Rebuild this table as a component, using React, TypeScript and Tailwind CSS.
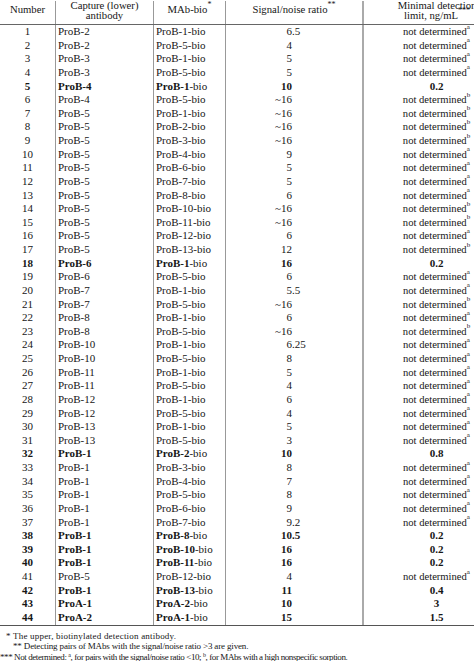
import React from 'react';

type Row = {
  n: number;
  capture: string;
  mab: string;
  ratio: string;
  limit: string;
  bold?: boolean;
};

const rows: Row[] = [
  { n: 1, capture: 'ProB-2', mab: 'ProB-1', ratio: '6.5', limit: 'a' },
  { n: 2, capture: 'ProB-2', mab: 'ProB-5', ratio: '4', limit: 'a' },
  { n: 3, capture: 'ProB-3', mab: 'ProB-1', ratio: '5', limit: 'a' },
  { n: 4, capture: 'ProB-3', mab: 'ProB-5', ratio: '5', limit: 'a' },
  { n: 5, capture: 'ProB-4', mab: 'ProB-1', ratio: '10', limit: '0.2', bold: true },
  { n: 6, capture: 'ProB-4', mab: 'ProB-5', ratio: '~16', limit: 'b' },
  { n: 7, capture: 'ProB-5', mab: 'ProB-1', ratio: '~16', limit: 'b' },
  { n: 8, capture: 'ProB-5', mab: 'ProB-2', ratio: '~16', limit: 'b' },
  { n: 9, capture: 'ProB-5', mab: 'ProB-3', ratio: '~16', limit: 'b' },
  { n: 10, capture: 'ProB-5', mab: 'ProB-4', ratio: '9', limit: 'a' },
  { n: 11, capture: 'ProB-5', mab: 'ProB-6', ratio: '5', limit: 'a' },
  { n: 12, capture: 'ProB-5', mab: 'ProB-7', ratio: '5', limit: 'a' },
  { n: 13, capture: 'ProB-5', mab: 'ProB-8', ratio: '6', limit: 'a' },
  { n: 14, capture: 'ProB-5', mab: 'ProB-10', ratio: '~16', limit: 'b' },
  { n: 15, capture: 'ProB-5', mab: 'ProB-11', ratio: '~16', limit: 'b' },
  { n: 16, capture: 'ProB-5', mab: 'ProB-12', ratio: '6', limit: 'a' },
  { n: 17, capture: 'ProB-5', mab: 'ProB-13', ratio: '12', limit: 'b' },
  { n: 18, capture: 'ProB-6', mab: 'ProB-1', ratio: '16', limit: '0.2', bold: true },
  { n: 19, capture: 'ProB-6', mab: 'ProB-5', ratio: '6', limit: 'a' },
  { n: 20, capture: 'ProB-7', mab: 'ProB-1', ratio: '5.5', limit: 'a' },
  { n: 21, capture: 'ProB-7', mab: 'ProB-5', ratio: '~16', limit: 'b' },
  { n: 22, capture: 'ProB-8', mab: 'ProB-1', ratio: '6', limit: 'a' },
  { n: 23, capture: 'ProB-8', mab: 'ProB-5', ratio: '~16', limit: 'b' },
  { n: 24, capture: 'ProB-10', mab: 'ProB-1', ratio: '6.25', limit: 'a' },
  { n: 25, capture: 'ProB-10', mab: 'ProB-5', ratio: '8', limit: 'a' },
  { n: 26, capture: 'ProB-11', mab: 'ProB-1', ratio: '5', limit: 'a' },
  { n: 27, capture: 'ProB-11', mab: 'ProB-5', ratio: '4', limit: 'a' },
  { n: 28, capture: 'ProB-12', mab: 'ProB-1', ratio: '6', limit: 'a' },
  { n: 29, capture: 'ProB-12', mab: 'ProB-5', ratio: '4', limit: 'a' },
  { n: 30, capture: 'ProB-13', mab: 'ProB-1', ratio: '5', limit: 'a' },
  { n: 31, capture: 'ProB-13', mab: 'ProB-5', ratio: '3', limit: 'a' },
  { n: 32, capture: 'ProB-1', mab: 'ProB-2', ratio: '10', limit: '0.8', bold: true },
  { n: 33, capture: 'ProB-1', mab: 'ProB-3', ratio: '8', limit: 'a' },
  { n: 34, capture: 'ProB-1', mab: 'ProB-4', ratio: '7', limit: 'a' },
  { n: 35, capture: 'ProB-1', mab: 'ProB-5', ratio: '8', limit: 'a' },
  { n: 36, capture: 'ProB-1', mab: 'ProB-6', ratio: '9', limit: 'a' },
  { n: 37, capture: 'ProB-1', mab: 'ProB-7', ratio: '9.2', limit: 'a' },
  { n: 38, capture: 'ProB-1', mab: 'ProB-8', ratio: '10.5', limit: '0.2', bold: true },
  { n: 39, capture: 'ProB-1', mab: 'ProB-10', ratio: '16', limit: '0.2', bold: true },
  { n: 40, capture: 'ProB-1', mab: 'ProB-11', ratio: '16', limit: '0.2', bold: true },
  { n: 41, capture: 'ProB-5', mab: 'ProB-12', ratio: '4', limit: 'a' },
  { n: 42, capture: 'ProB-1', mab: 'ProB-13', ratio: '11', limit: '0.4', bold: true },
  { n: 43, capture: 'ProA-1', mab: 'ProA-2', ratio: '10', limit: '3', bold: true },
  { n: 44, capture: 'ProA-2', mab: 'ProA-1', ratio: '15', limit: '1.5', bold: true },
];

const grid = 'grid grid-cols-[56px_98px_72px_138px_148px]';

export default function App() {
  return (
    <div
      className="w-[474px] h-[661px] overflow-hidden bg-white text-[#161616]"
      style={{ fontFamily: '"Liberation Serif", "Times New Roman", serif' }}
    >
      <div className="w-[512px] text-[11px]">
        <Header />
        {rows.map((r) => (
          <DataRow key={r.n} row={r} />
        ))}
        <div className="border-t border-[#555]" />
        <Notes />
      </div>
    </div>
  );
}

function Header() {
  return (
    <div className={`${grid} h-[25px] border-b border-[#666] text-[10.7px] leading-[9.6px] pt-px`}>
      <div className="border-r border-[#999] pt-[3.5px] text-center">Number</div>
      <div className="border-r border-[#999] text-center">
        <div>Capture (lower)</div>
        <div>antibody</div>
      </div>
      <div className="border-r border-[#999] pt-[3.5px] text-center">
        MAb-bio<sup className="text-[8px] align-[2px]">*</sup>
      </div>
      <div className="border-r-2 border-[#aaa] pt-[3.5px] text-center">
        Signal/noise ratio<sup className="text-[8px] align-[2px]">**</sup>
      </div>
      <div className="text-center pr-[2px]">
        <div className="whitespace-nowrap">Minimal detection</div>
        <div className="whitespace-nowrap">
          limit, ng/mL<sup className="text-[8px] align-[2px]">***</sup>
        </div>
      </div>
    </div>
  );
}

function DataRow({ row }: { row: Row }) {
  const b = row.bold ? 'font-bold' : '';
  const [intPart, frac] = row.ratio.split('.');
  return (
    <div className={`${grid} h-[13.636px] leading-[13.636px]`}>
      <div className={`border-r border-[#999] text-center ${b}`}>{row.n}</div>
      <div className={`border-r border-[#999] pl-[2px] ${b}`}>{row.capture}</div>
      <div className="border-r border-[#999] pl-[2px]">
        <span className={b}>{row.mab}</span>-bio
      </div>
      <div className={`border-r-2 border-[#aaa] flex ${b}`}>
        <span className="w-[66px] text-right">{intPart}</span>
        {frac && <span>.{frac}</span>}
      </div>
      <div className="text-center pr-[3px]">
        {row.limit === 'a' || row.limit === 'b' ? (
          <span className="text-[10.6px]">
            not determined
            <sup className="text-[7px] align-[3px]">{row.limit}</sup>
          </span>
        ) : (
          <span className="font-bold">{row.limit}</span>
        )}
      </div>
    </div>
  );
}

function Notes() {
  return (
    <div className="text-[9px] leading-[10.5px] pt-[5px] whitespace-nowrap">
      <div className="pl-[6px] tracking-[0.2px]">* The upper, biotinylated detection antibody.</div>
      <div className="pl-[13px] tracking-[-0.15px]">
        ** Detecting pairs of MAbs with the signal/noise ratio &gt;3 are given.
      </div>
      <div className="tracking-[-0.42px]">
        *** Not determined: <sup className="text-[6px]">a</sup>, for pairs with the signal/noise
        ratio &lt;10; <sup className="text-[6px]">b</sup>, for MAbs with a high nonspecific
        sorption.
      </div>
    </div>
  );
}
